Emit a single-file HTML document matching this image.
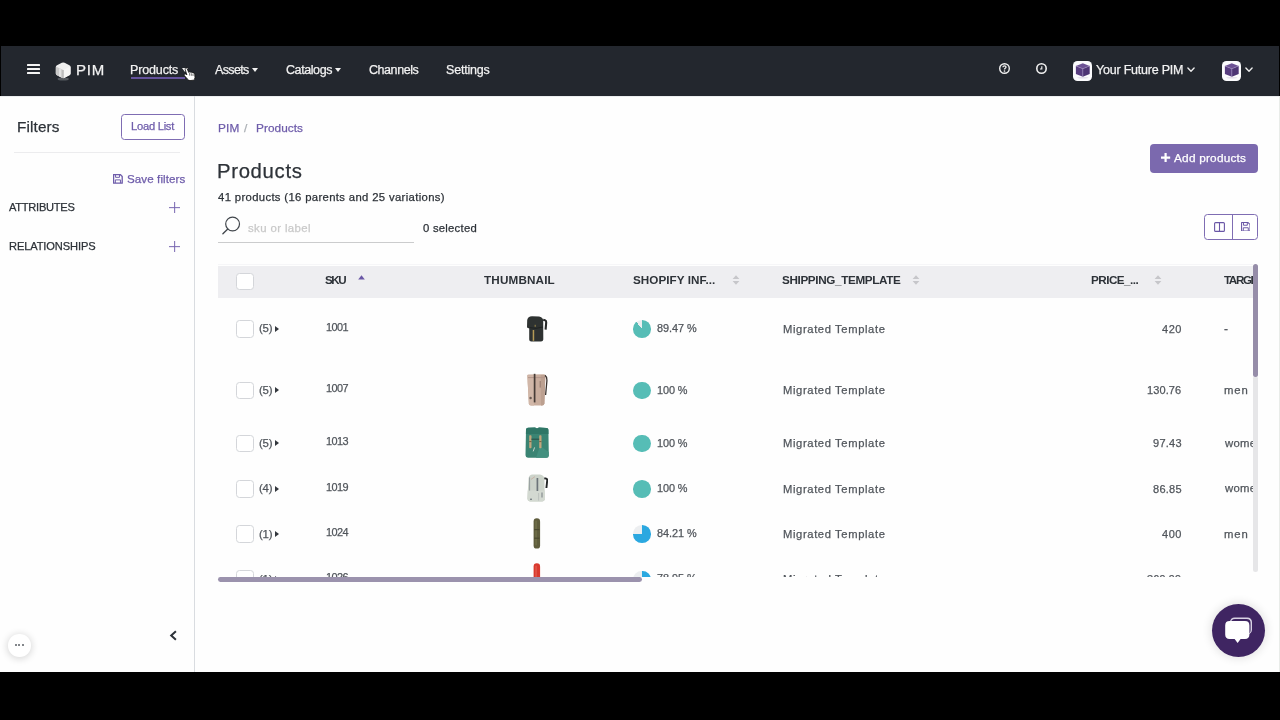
<!DOCTYPE html>
<html lang="en"><head><meta charset="utf-8"><title>PIM – Products</title>
<style>
*{box-sizing:border-box;margin:0;padding:0}
html,body{width:1280px;height:720px;overflow:hidden;background:#000;font-family:"Liberation Sans",sans-serif}
body{position:relative;font-family:"Liberation Sans",sans-serif;color:#2d3238}
.t{position:absolute;white-space:nowrap;line-height:1;display:block;will-change:transform;-webkit-text-stroke:.25px}
.abs,svg{position:absolute}
header.nav{position:absolute;left:1px;top:46px;width:1278px;height:49.7px;background:#23272e}
.burger i{position:absolute;left:26px;width:13px;height:2px;background:#f4f4f4;border-radius:.5px}
.uline{position:absolute;left:130px;top:30.5px;width:54.2px;height:2px;background:#64529c}
.caret{position:absolute;width:0;height:0;border-left:3.9px solid transparent;border-right:3.9px solid transparent;border-top:4.2px solid #f2f2f2}
.logo{position:absolute;width:19.6px;height:20px;border-radius:4.5px;background:#fbfbfd;overflow:hidden}
aside.side{position:absolute;left:0;top:96px;width:195px;height:576px;background:#fefefe;border-right:1px solid #d9dce0;box-shadow:inset 0 1px 0 #eceef0}
.btn-o{position:absolute;border:1px solid #7f6db3;border-radius:3.5px;background:#fff}
.hr{position:absolute;left:14px;top:56.3px;width:166px;height:1px;background:#ececee}
.more{position:absolute;left:8.2px;top:538px;width:22.6px;height:22.6px;border-radius:50%;background:#fff;box-shadow:0 1px 7px 1px rgba(0,0,0,.15)}
.more i{position:absolute;top:10.4px;width:2px;height:2px;border-radius:50%;background:#5a5f65}
main{position:absolute;left:195px;top:96px;width:1085px;height:576px;background:#fefefe;box-shadow:inset 0 1px 0 #eceef0}
.btn-p{position:absolute;left:955px;top:47.8px;width:108px;height:29px;border-radius:4px;background:#7b69ae}
.sline{position:absolute;left:22.6px;top:145.6px;width:196px;height:1px;background:#cbcccd}
.grp{position:absolute;left:1009.2px;top:118.2px;width:53.8px;height:25.4px;border:1px solid #7f6db3;border-radius:3.5px;background:#fff}
.grp b{position:absolute;left:27px;top:0;width:1px;height:100%;background:#7f6db3}
.tbl{position:absolute;left:23px;top:169px;width:1035px;height:312px;overflow:hidden;background:#fefefe}
.thead{position:absolute;left:0;top:1px;width:1035px;height:32.3px;background:#eeeef1}
.cb{position:absolute;left:18.2px;width:17.6px;height:17.6px;border:1px solid #d4d6da;border-radius:3.5px;background:#fff}
.tri{position:absolute;left:57.4px;width:0;height:0;border-top:3.5px solid transparent;border-bottom:3.5px solid transparent;border-left:4.5px solid #33373d}
.pie{position:absolute;left:415.2px;width:17.6px;height:17.6px;border-radius:50%}
.vthumb{position:absolute;left:1058.3px;top:168px;width:4.9px;height:112.5px;background:#968da9;border-radius:2.5px}
.vtrack{position:absolute;left:1058.3px;top:280px;width:4.9px;height:196px;background:#e6e6e8;border-radius:2.5px}
.hthumb{position:absolute;left:22.6px;top:480.8px;width:424.5px;height:4.8px;background:#9b92ad;border-radius:2.4px}
.th{filter:blur(.35px)}
.chat{position:absolute;left:1017.3px;top:508.2px;width:53px;height:53px;border-radius:50%;background:#3f2562;box-shadow:0 0 9px 2px rgba(0,0,0,.10)}
</style></head>
<body>
<header class="nav">
<div class="burger"><i style="top:18px"></i><i style="top:22.1px"></i><i style="top:26.2px"></i></div>
<svg style="left:53.6px;top:15.6px" width="16.4" height="19" viewBox="0 0 16.4 19">
<ellipse cx="8.2" cy="16.9" rx="5.6" ry="1.5" fill="#6b6f75" opacity=".7"/>
<path d="M8.2 0.5 Q8.9 0.5 9.6 0.85 L14.4 3.2 Q15.6 3.9 15.6 5.2 V11.4 Q15.6 12.7 14.4 13.3 L9.6 15.75 Q8.2 16.4 6.8 15.75 L2 13.3 Q0.8 12.7 0.8 11.4 V5.2 Q0.8 3.9 2 3.2 L6.8 0.85 Q7.5 0.5 8.2 0.5 Z" fill="#efefef"/>
<path d="M0.9 4.6 L8.2 8 V16.2 Q7.5 16.1 6.8 15.75 L2 13.3 Q0.8 12.7 0.8 11.4 Z" fill="#c9c9c9"/>
<path d="M4 6.2 L6.2 7.2 V15.3 L4 14.3 Z" fill="#e3e3e3"/>
<path d="M8.2 8 L15.5 4.6 V11.4 Q15.6 12.7 14.4 13.3 L9.6 15.75 Q8.9 16.1 8.2 16.2 Z" fill="#f6f6f6"/>
<path d="M8.2 8 V16.2" stroke="#9a9a9a" stroke-width=".7"/>
</svg>
<div class="uline"></div>
<i class="caret" style="left:180.6px;top:21.7px"></i>
<i class="caret" style="left:250.8px;top:21.7px"></i>
<i class="caret" style="left:333.8px;top:21.7px"></i>
<svg style="left:996.7px;top:16.3px" width="13" height="13" viewBox="0 0 13 13"><circle cx="6.5" cy="6.5" r="4.8" fill="none" stroke="#f0f0f0" stroke-width="1.4"/><path d="M4.9 5.3 Q5 3.8 6.5 3.8 Q8 3.8 8 5 Q8 5.8 7.2 6.3 Q6.5 6.7 6.5 7.4" fill="none" stroke="#f0f0f0" stroke-width="1.35"/><circle cx="6.5" cy="9" r=".85" fill="#f0f0f0"/></svg>
<svg style="left:1033.8px;top:16.2px" width="13" height="13" viewBox="0 0 13 13"><circle cx="6.5" cy="6.5" r="4.7" fill="none" stroke="#f0f0f0" stroke-width="1.6"/><path d="M6.8 4.2 V7 H5" fill="none" stroke="#f0f0f0" stroke-width="1.15"/></svg>
<div class="logo" style="left:1071.8px;top:14.6px"><svg style="left:0;top:0" width="19.6" height="20" viewBox="0 0 19.6 20"><path d="M9.8 2.2 L16.7 4.9 L9.8 7.7 L2.9 4.9 Z" fill="#6c5194"/><path d="M2.9 4.9 L9.8 7.7 V15.7 L2.9 12.9 Z" fill="#583d80"/><path d="M16.7 4.9 L9.8 7.7 V15.7 L16.7 12.9 Z" fill="#4d3474"/><path d="M2.9 4.9 L9.8 7.7 L16.7 4.9 M9.8 7.7 V15.7" fill="none" stroke="#a793c4" stroke-width=".55"/><ellipse cx="9.8" cy="16.7" rx="5.6" ry=".7" fill="#e3deea"/></svg></div>
<svg style="left:1186.4px;top:21.4px" width="8" height="6" viewBox="0 0 8 6"><path d="M0.9 1 L4 4.2 L7.1 1" fill="none" stroke="#eeeeee" stroke-width="1.35" stroke-linecap="round" stroke-linejoin="round"/></svg>
<div class="logo" style="left:1220.8px;top:14.6px"><svg style="left:0;top:0" width="19.6" height="20" viewBox="0 0 19.6 20"><path d="M9.8 2.2 L16.7 4.9 L9.8 7.7 L2.9 4.9 Z" fill="#6c5194"/><path d="M2.9 4.9 L9.8 7.7 V15.7 L2.9 12.9 Z" fill="#583d80"/><path d="M16.7 4.9 L9.8 7.7 V15.7 L16.7 12.9 Z" fill="#4d3474"/><path d="M2.9 4.9 L9.8 7.7 L16.7 4.9 M9.8 7.7 V15.7" fill="none" stroke="#a793c4" stroke-width=".55"/><ellipse cx="9.8" cy="16.7" rx="5.6" ry=".7" fill="#e3deea"/></svg></div>
<svg style="left:1243.7px;top:21.4px" width="8" height="6" viewBox="0 0 8 6"><path d="M0.9 1 L4 4.2 L7.1 1" fill="none" stroke="#eeeeee" stroke-width="1.35" stroke-linecap="round" stroke-linejoin="round"/></svg>
<svg style="left:181.9px;top:21px" width="13" height="14" viewBox="0 0 13 14">
<path d="M2.6 1.2 Q3.5 0.6 4.1 1.6 L5.7 5.4 L6.6 4.9 Q7.4 4.7 7.8 5.5 L8.6 5.2 Q9.5 5.1 9.8 6 L10.5 5.9 Q11.6 6 11.7 7.2 L12 10.4 Q12 12.4 10.4 13.2 L7 13.6 Q5.4 13.4 4.4 12 L1.4 8.6 Q0.8 7.6 1.8 7 Q2.6 6.7 3.3 7.4 L3.9 8 L2.2 2.4 Q2 1.6 2.6 1.2 Z" fill="#ffffff" stroke="#111" stroke-width=".8" stroke-linejoin="round"/>
<path d="M6.6 6 V8.6 M8.3 6.3 V8.8 M10 6.9 V9" stroke="#111" stroke-width=".6"/>
</svg>
<span class="t" style="left:75.20px;top:16.10px;font-size:15px;letter-spacing:0.814px;color:#f2f2f2">PIM</span>
<span class="t" style="left:129.00px;top:17.72px;font-size:12.5px;letter-spacing:-0.140px;color:#f2f2f2">Products</span>
<span class="t" style="left:214.00px;top:17.72px;font-size:12.5px;letter-spacing:-0.652px;color:#f2f2f2">Assets</span>
<span class="t" style="left:285.10px;top:17.72px;font-size:12.5px;letter-spacing:-0.412px;color:#f2f2f2">Catalogs</span>
<span class="t" style="left:368.00px;top:17.72px;font-size:12.5px;letter-spacing:-0.438px;color:#f2f2f2">Channels</span>
<span class="t" style="left:444.50px;top:17.72px;font-size:12.5px;letter-spacing:-0.202px;color:#f2f2f2">Settings</span>
<span class="t" style="left:1095.30px;top:18.12px;font-size:12.5px;letter-spacing:-0.217px;color:#f2f2f2">Your Future PIM</span>
</header>
<aside class="side">
<div class="btn-o" style="left:121px;top:17.7px;width:64.2px;height:26px"></div>
<div class="hr"></div>
<svg style="left:113.2px;top:78.4px" width="9.8" height="9.8" viewBox="0 0 10 10"><path d="M0.6 0.6 H7.4 L9.4 2.6 V9.4 H0.6 Z" fill="none" stroke="#6e5caa" stroke-width="1.35" stroke-linejoin="round"/><path d="M2.6 0.8 V3.4 H6.6 V0.8 M2.4 9.2 V6 H7.6 V9.2" fill="none" stroke="#6e5caa" stroke-width="1"/></svg>
<svg style="left:169px;top:105.8px" width="11.3" height="11.3" viewBox="0 0 11.3 11.3"><path d="M5.65 0 V11.3 M0 5.65 H11.3" stroke="#7665b0" stroke-width="1" fill="none"/></svg>
<svg style="left:169px;top:144.8px" width="11.3" height="11.3" viewBox="0 0 11.3 11.3"><path d="M5.65 0 V11.3 M0 5.65 H11.3" stroke="#7665b0" stroke-width="1" fill="none"/></svg>
<svg style="left:168.6px;top:533.6px" width="9" height="11" viewBox="0 0 9 11"><path d="M6.9 1.2 L2.2 5.5 L6.9 9.8" fill="none" stroke="#2d3238" stroke-width="2" stroke-linejoin="miter"/></svg>
<div class="more"><i style="left:6.9px"></i><i style="left:10.3px"></i><i style="left:13.7px"></i></div>
<span class="t" style="left:17.40px;top:23.45px;font-size:15.3px;letter-spacing:0.135px;color:#2d3238">Filters</span>
<span class="t" style="left:131.30px;top:24.92px;font-size:11.2px;letter-spacing:-0.262px;color:#6e5caa">Load List</span>
<span class="t" style="left:126.50px;top:77.08px;font-size:11.6px;letter-spacing:0.086px;color:#6e5caa">Save filters</span>
<span class="t" style="left:9.00px;top:105.90px;font-size:11.1px;letter-spacing:-0.268px;color:#2d3238">ATTRIBUTES</span>
<span class="t" style="left:9.00px;top:144.90px;font-size:11.1px;letter-spacing:-0.112px;color:#2d3238">RELATIONSHIPS</span>
</aside>
<main>
<div class="btn-p"><svg style="left:11.4px;top:9.4px" width="9.2" height="9.2" viewBox="0 0 9.2 9.2"><path d="M4.6 0 V9.2 M0 4.6 H9.2" stroke="#ffffff" stroke-width="2.2" fill="none"/></svg></div>
<svg style="left:26px;top:119.6px" width="20" height="20" viewBox="0 0 20 20"><circle cx="11.6" cy="8" r="6.9" fill="none" stroke="#41464c" stroke-width="1.2"/><path d="M6.8 13 L1.9 17.7" stroke="#41464c" stroke-width="1.35" stroke-linecap="round"/></svg>
<div class="sline"></div>
<div class="grp"><b></b>
<svg style="left:8.6px;top:6.6px" width="11" height="10" viewBox="0 0 11 10"><rect x=".6" y=".6" width="9.8" height="8.8" rx="1" fill="none" stroke="#6a57a6" stroke-width="1.1"/><path d="M5.5 .6 V9.4" stroke="#6a57a6" stroke-width="1.1"/></svg>
<svg style="left:35.4px;top:6.7px" width="9.6" height="9.6" viewBox="0 0 10 10"><path d="M0.6 0.6 H7.4 L9.4 2.6 V9.4 H0.6 Z" fill="none" stroke="#6a57a6" stroke-width="1.1" stroke-linejoin="round"/><path d="M2.6 0.8 V3.4 H6.6 V0.8 M2.4 9.2 V6 H7.6 V9.2" fill="none" stroke="#6a57a6" stroke-width="1"/></svg>
</div>
<div class="abs" style="left:23px;top:168.3px;width:1035px;height:2px;background:#f6f6f8"></div>
<section class="tbl">
<div class="thead"></div>
<div class="cb" style="top:7.6px"></div>
<svg style="left:140.4px;top:10.4px" width="7" height="5" viewBox="0 0 7 5"><path d="M3.5 0.3 L6.8 4.4 H0.2 Z" fill="#6a57a6"/></svg>
<svg style="left:514.4px;top:10px" width="8" height="10" viewBox="0 0 8 10"><path d="M4 0.3 L7.4 4.1 H0.6 Z M4 9.7 L7.4 5.9 H0.6 Z" fill="#c6c6ca"/></svg>
<svg style="left:694.4px;top:10px" width="8" height="10" viewBox="0 0 8 10"><path d="M4 0.3 L7.4 4.1 H0.6 Z M4 9.7 L7.4 5.9 H0.6 Z" fill="#c6c6ca"/></svg>
<svg style="left:936.4px;top:10px" width="8" height="10" viewBox="0 0 8 10"><path d="M4 0.3 L7.4 4.1 H0.6 Z M4 9.7 L7.4 5.9 H0.6 Z" fill="#c6c6ca"/></svg>
<div class="cb" style="top:55.1px"></div><i class="tri" style="top:60.7px"></i><svg class="th" style="left:308.0px;top:50.0px" width="22" height="28" viewBox="0 0 22 28"><path d="M1.2 5 Q1.8 1.6 6 1.3 L13 1.4 Q16.6 1.8 17.2 5.2 L17.3 24.4 Q17.1 26.4 15 26.5 L5.2 26.5 Q3.2 26.4 3.2 24.4 L3.2 13.4 L1 12.4 Z" fill="#2e3231"/><path d="M3.4 12.6 Q10 14.4 17 12" fill="none" stroke="#1e2121" stroke-width="1"/><path d="M17.2 4.8 L19 5.2 Q20.4 5.6 20.2 7.4 L19.6 14.6" fill="none" stroke="#262828" stroke-width="2.1"/><rect x="6.7" y="15" width="1.5" height="10.8" fill="#b59b56"/><rect x="8.6" y="9.8" width="1.2" height="2" fill="#8a7a46"/></svg><div class="pie" style="top:55.2px;background:conic-gradient(#56bdb6 0 89.47%, #eceef0 89.47% 100%)"></div>
<div class="cb" style="top:116.6px"></div><i class="tri" style="top:122.2px"></i><svg class="th" style="left:308.0px;top:108.0px" width="22" height="34" viewBox="0 0 22 34"><path d="M1.3 2.6 Q1.4 1.6 2.6 1.5 L18.2 1.2 Q19.4 1.3 19.4 2.6 L18.4 30.2 Q18.2 32.4 16 32.6 L5 32.6 Q3 32.4 2.8 30.2 Z" fill="#c9ad9d"/><path d="M1.3 2.6 L8 2.2 V32.6 L5 32.6 Q3 32.4 2.8 30.2 Z" fill="#d1b7a8"/><path d="M14.6 2 L19.4 2 L18.4 30.2 Q18.2 32.4 16 32.6 L15 32.6 Z" fill="#bca090"/><path d="M2 4.6 H19" stroke="#b3978a" stroke-width="1"/><path d="M8.6 0.8 V29.4" stroke="#463c36" stroke-width="1.7"/><path d="M19 2.4 Q21.4 4 20.8 9 L19.6 22" fill="none" stroke="#3a322e" stroke-width="1.3"/><path d="M14.2 8 V14.6" stroke="#8d7468" stroke-width=".9"/><circle cx="4.6" cy="25" r="1.2" fill="#6a5a52"/></svg><div class="pie" style="top:116.7px;background:#56bdb6"></div>
<div class="cb" style="top:169.8px"></div><i class="tri" style="top:175.4px"></i><svg class="th" style="left:306.0px;top:161.0px" width="26" height="33" viewBox="0 0 26 33"><path d="M2 3.6 Q2.2 1.9 4 1.8 L11 1.5 L13 2.4 L15 1.5 L22.6 1.9 Q24.4 2.1 24.4 3.8 L24.8 29.4 Q24.7 31.6 22.4 31.7 L4 31.8 Q1.5 31.6 1.5 29.2 Z" fill="#3a8473"/><path d="M2 3.6 Q2.2 1.9 4 1.8 L11 1.5 L13 2.4 L15 1.5 L22.6 1.9 Q24.4 2.1 24.4 3.8 L24.5 8 H1.9 Z" fill="#2f7666"/><path d="M16 20 L24.7 26 V29.4 Q24.7 31.6 22.4 31.7 L12 31.7 Z" fill="#43907f"/><rect x="5.2" y="9.2" width="2.3" height="13" rx=".7" fill="#c3a57c"/><rect x="15.2" y="9.2" width="2.3" height="13" rx=".7" fill="#c3a57c"/><path d="M7.4 13.2 H15.2" stroke="#27463d" stroke-width=".9"/><path d="M5.2 15.6 h2.3 M15.2 15.6 h2.3" stroke="#6b5a3e" stroke-width=".9"/><path d="M10.6 21.4 L9.2 25.4" stroke="#d6dcd2" stroke-width=".9"/></svg><div class="pie" style="top:169.9px;background:#56bdb6"></div>
<div class="cb" style="top:215.0px"></div><i class="tri" style="top:220.6px"></i><svg class="th" style="left:308.0px;top:208.0px" width="22" height="30" viewBox="0 0 22 30"><path d="M2.6 5 Q3.2 1.7 6.6 1.5 L14 1.5 Q17.6 1.9 18.4 5.4 L18.8 26.2 Q18.6 28.3 16.4 28.4 L3.8 28.4 Q1.4 28.2 1.4 25.8 Z" fill="#ccd3ca"/><path d="M1.6 17.4 H18.7 L18.8 26.2 Q18.6 28.3 16.4 28.4 L3.8 28.4 Q1.4 28.2 1.4 25.8 Z" fill="#d3d9d1"/><path d="M3.6 4.4 V17.6" stroke="#8f979a" stroke-width=".9"/><path d="M11.4 5 V18" stroke="#6c7479" stroke-width="1.7"/><path d="M18.3 5.2 L20.2 5.6 Q21.4 6 21.2 7.6 L20.4 15" fill="none" stroke="#232626" stroke-width="1.9"/><path d="M16 19.4 V24.6" stroke="#8b9294" stroke-width="1.3"/><path d="M12.6 20 V27.6" stroke="#b5bdb8" stroke-width=".8"/><rect x="4" y="25.6" width="2" height="1.4" fill="#7e8688"/><path d="M5 6.4 L9 3.6" stroke="#c7a79c" stroke-width=".8"/></svg><div class="pie" style="top:215.1px;background:#56bdb6"></div>
<div class="cb" style="top:260.2px"></div><i class="tri" style="top:265.8px"></i><svg class="th" style="left:315.4px;top:252.6px" width="8" height="31" viewBox="0 0 8 31"><rect x="0.6" y="0.3" width="6.5" height="30.3" rx="3.2" fill="#5e5c3c"/><rect x="2.3" y="2.4" width="1.5" height="25" rx=".7" fill="#706f49"/><rect x="1.2" y="11" width="5.3" height="1.2" fill="#4a4930"/><rect x="1.2" y="19.6" width="5.3" height="1.2" fill="#4a4930"/></svg><div class="pie" style="top:260.3px;background:conic-gradient(#2ba8e0 0 75%, #eceef0 75% 100%)"></div>
<div class="cb" style="top:305.4px"></div><i class="tri" style="top:311.0px"></i><svg class="th" style="left:315.4px;top:298.0px" width="8" height="31" viewBox="0 0 8 31"><rect x="0.6" y="0.3" width="6.5" height="30.3" rx="3.2" fill="#d9392e"/><rect x="2.3" y="2.4" width="1.5" height="25" rx=".7" fill="#e2584c"/></svg><div class="pie" style="top:305.5px;background:conic-gradient(#2ba8e0 0 78.95%, #eceef0 78.95% 100%)"></div>
<span class="t" style="left:107.00px;top:9.08px;font-size:11.6px;letter-spacing:-1.403px;color:#2d3238;font-weight:700;-webkit-text-stroke:0">SKU</span>
<span class="t" style="left:266.40px;top:9.00px;font-size:11.7px;letter-spacing:0.160px;color:#2d3238;font-weight:700;-webkit-text-stroke:0">THUMBNAIL</span>
<span class="t" style="left:415.10px;top:9.00px;font-size:11.7px;letter-spacing:0.048px;color:#2d3238;font-weight:700;-webkit-text-stroke:0">SHOPIFY INF...</span>
<span class="t" style="left:564.30px;top:9.00px;font-size:11.7px;letter-spacing:-0.354px;color:#2d3238;font-weight:700;-webkit-text-stroke:0">SHIPPING_TEMPLATE</span>
<span class="t" style="left:872.80px;top:9.00px;font-size:11.7px;letter-spacing:-0.527px;color:#2d3238;font-weight:700;-webkit-text-stroke:0">PRICE_...</span>
<span class="t" style="left:1006.20px;top:9.00px;font-size:11.7px;letter-spacing:-1.408px;color:#2d3238;font-weight:700;-webkit-text-stroke:0">TARGET</span>
<span class="t" style="left:40.80px;top:58.45px;font-size:11.4px;letter-spacing:-0.214px;color:#50555b">(5)</span>
<span class="t" style="left:107.60px;top:56.77px;font-size:10.9px;letter-spacing:-0.524px;color:#50555b">1001</span>
<span class="t" style="left:439.20px;top:58.07px;font-size:10.9px;letter-spacing:-0.046px;color:#50555b">89.47 %</span>
<span class="t" style="left:564.50px;top:58.62px;font-size:11.2px;letter-spacing:0.631px;color:#50555b">Migrated Template</span>
<span class="t" style="left:943.70px;top:58.79px;font-size:11px;letter-spacing:0.532px;color:#50555b">420</span>
<span class="t" style="left:1005.50px;top:57.94px;font-size:12px;letter-spacing:0.000px;color:#50555b">-</span>
<span class="t" style="left:40.80px;top:119.95px;font-size:11.4px;letter-spacing:-0.214px;color:#50555b">(5)</span>
<span class="t" style="left:107.60px;top:118.27px;font-size:10.9px;letter-spacing:-0.524px;color:#50555b">1007</span>
<span class="t" style="left:439.20px;top:119.57px;font-size:10.9px;letter-spacing:-0.099px;color:#50555b">100 %</span>
<span class="t" style="left:564.50px;top:120.12px;font-size:11.2px;letter-spacing:0.631px;color:#50555b">Migrated Template</span>
<span class="t" style="left:929.00px;top:120.29px;font-size:11px;letter-spacing:0.095px;color:#50555b">130.76</span>
<span class="t" style="left:1006.20px;top:120.03px;font-size:11.3px;letter-spacing:0.853px;color:#50555b">men</span>
<span class="t" style="left:40.80px;top:173.15px;font-size:11.4px;letter-spacing:-0.214px;color:#50555b">(5)</span>
<span class="t" style="left:107.60px;top:171.47px;font-size:10.9px;letter-spacing:-0.524px;color:#50555b">1013</span>
<span class="t" style="left:439.20px;top:172.77px;font-size:10.9px;letter-spacing:-0.099px;color:#50555b">100 %</span>
<span class="t" style="left:564.50px;top:173.32px;font-size:11.2px;letter-spacing:0.631px;color:#50555b">Migrated Template</span>
<span class="t" style="left:934.50px;top:173.49px;font-size:11px;letter-spacing:0.273px;color:#50555b">97.43</span>
<span class="t" style="left:1006.80px;top:173.23px;font-size:11.3px;letter-spacing:0.266px;color:#50555b">women</span>
<span class="t" style="left:40.80px;top:218.35px;font-size:11.4px;letter-spacing:-0.214px;color:#50555b">(4)</span>
<span class="t" style="left:107.60px;top:216.67px;font-size:10.9px;letter-spacing:-0.524px;color:#50555b">1019</span>
<span class="t" style="left:439.20px;top:217.97px;font-size:10.9px;letter-spacing:-0.099px;color:#50555b">100 %</span>
<span class="t" style="left:564.50px;top:218.52px;font-size:11.2px;letter-spacing:0.631px;color:#50555b">Migrated Template</span>
<span class="t" style="left:934.50px;top:218.69px;font-size:11px;letter-spacing:0.273px;color:#50555b">86.85</span>
<span class="t" style="left:1006.80px;top:218.43px;font-size:11.3px;letter-spacing:0.266px;color:#50555b">women</span>
<span class="t" style="left:40.80px;top:263.55px;font-size:11.4px;letter-spacing:-0.214px;color:#50555b">(1)</span>
<span class="t" style="left:107.60px;top:261.87px;font-size:10.9px;letter-spacing:-0.524px;color:#50555b">1024</span>
<span class="t" style="left:439.20px;top:263.17px;font-size:10.9px;letter-spacing:-0.046px;color:#50555b">84.21 %</span>
<span class="t" style="left:564.50px;top:263.72px;font-size:11.2px;letter-spacing:0.631px;color:#50555b">Migrated Template</span>
<span class="t" style="left:943.70px;top:263.89px;font-size:11px;letter-spacing:0.532px;color:#50555b">400</span>
<span class="t" style="left:1006.20px;top:263.63px;font-size:11.3px;letter-spacing:0.853px;color:#50555b">men</span>
<span class="t" style="left:40.80px;top:308.75px;font-size:11.4px;letter-spacing:-0.214px;color:#50555b">(1)</span>
<span class="t" style="left:107.60px;top:307.07px;font-size:10.9px;letter-spacing:-0.524px;color:#50555b">1026</span>
<span class="t" style="left:439.20px;top:308.37px;font-size:10.9px;letter-spacing:-0.046px;color:#50555b">78.95 %</span>
<span class="t" style="left:564.50px;top:308.92px;font-size:11.2px;letter-spacing:0.631px;color:#50555b">Migrated Template</span>
<span class="t" style="left:929.00px;top:309.09px;font-size:11px;letter-spacing:0.095px;color:#50555b">369.99</span>
<span class="t" style="left:1005.50px;top:308.24px;font-size:12px;letter-spacing:0.000px;color:#50555b">-</span>
</section>
<div class="abs" style="left:1084px;top:0;width:1px;height:576px;background:#e9ece9"></div>
<div class="vtrack"></div><div class="vthumb"></div>
<div class="hthumb"></div>
<div class="chat"><svg style="left:12px;top:12px" width="30" height="28" viewBox="0 0 30 28">
<rect x="6" y="1.4" width="22" height="17" rx="4.6" fill="#d9d2e4"/>
<rect x="7" y="3" width="19.6" height="15" rx="4" fill="#3f2562"/>
<path d="M5.6 5 H21 Q25.4 5 25.4 9.4 V18.6 Q25.4 23 21 23 H16.6 L13.6 27 L10.6 23 H5.6 Q1.2 23 1.2 18.6 V9.4 Q1.2 5 5.6 5 Z" fill="#ffffff"/></svg></div>
<span class="t" style="left:22.60px;top:26.81px;font-size:11.8px;letter-spacing:0.127px;color:#6e5caa">PIM</span>
<span class="t" style="left:49.30px;top:26.81px;font-size:11.8px;letter-spacing:0.000px;color:#a9aeb3">/</span>
<span class="t" style="left:60.50px;top:26.81px;font-size:11.8px;letter-spacing:0.064px;color:#6e5caa">Products</span>
<span class="t" style="left:21.80px;top:64.62px;font-size:20.3px;letter-spacing:0.686px;color:#2d3238">Products</span>
<span class="t" style="left:22.60px;top:96.33px;font-size:11.3px;letter-spacing:0.349px;color:#2d3238">41 products (16 parents and 25 variations)</span>
<span class="t" style="left:53.00px;top:127.05px;font-size:11.4px;letter-spacing:0.389px;color:#c9c9c9">sku or label</span>
<span class="t" style="left:227.60px;top:127.13px;font-size:11.3px;letter-spacing:0.243px;color:#2d3238">0 selected</span>
<span class="t" style="left:978.70px;top:56.81px;font-size:11.8px;letter-spacing:0.226px;color:#ffffff">Add products</span>
</main>
</body></html>
